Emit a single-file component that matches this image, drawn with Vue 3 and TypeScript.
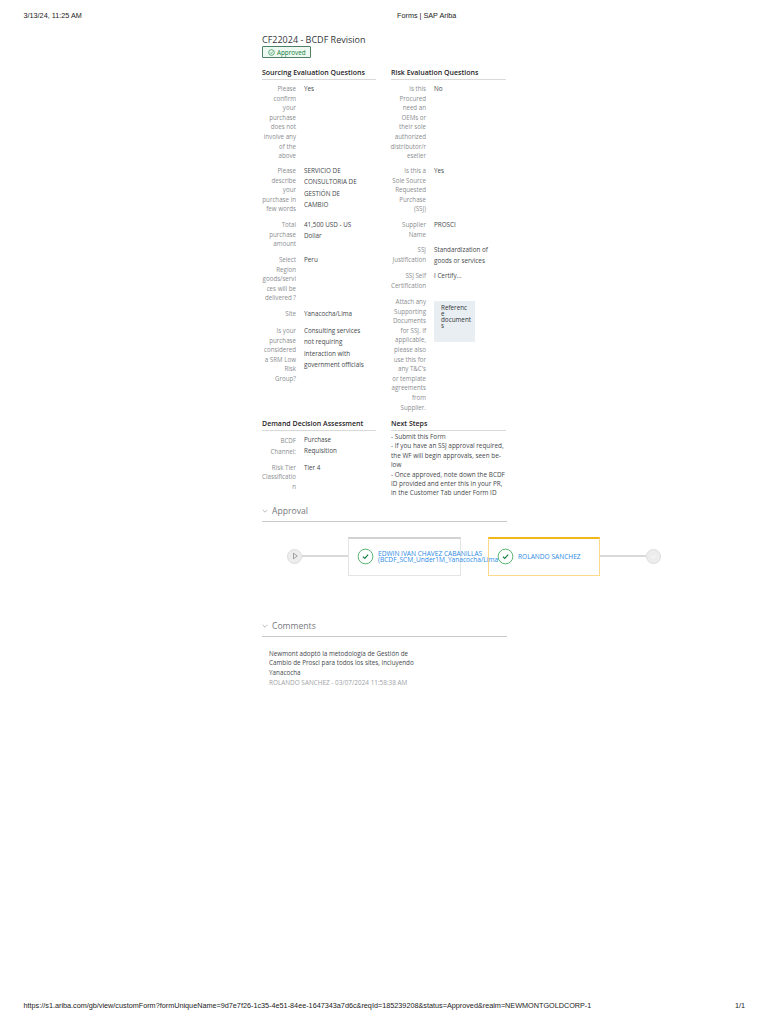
<script setup lang="ts">
interface Row { label: string; value?: string; height: number; doc?: boolean }

const sourcing: Row[] = [
  { label: 'Please confirm your purchase does not involve any of the above', value: 'Yes', height: 82 },
  { label: 'Please describe your purchase in few words', value: 'SERVICIO DE CONSULTORIA DE GESTIÓN DE CAMBIO', height: 54 },
  { label: 'Total purchase amount', value: '41,500 USD - US Dollar', height: 35 },
  { label: 'Select Region goods/services will be delivered ?', value: 'Peru', height: 54 },
  { label: 'Site', value: 'Yanacocha/Lima', height: 17 },
  { label: 'Is your purchase considered a SRM Low Risk Group?', value: 'Consulting services not requiring interaction with government officials', height: 60 },
]
const risk: Row[] = [
  { label: 'Is this Procured need an OEMs or their sole authorized distributor/\u2060reseller', value: 'No', height: 82 },
  { label: 'Is this a Sole Source Requested Purchase (SSJ)', value: 'Yes', height: 54 },
  { label: 'Supplier Name', value: 'PROSCI', height: 25 },
  { label: 'SSJ Justification', value: 'Standardization of goods or services', height: 26 },
  { label: 'SSJ Self Certification', value: 'I Certify...', height: 26 },
  { label: "Attach any Supporting Documents for SSJ. If applicable, please also use this for any T&C's or template agreements from Supplier.", height: 116, doc: true },
]
const demand: Row[] = [
  { label: 'BCDF Channel:', value: 'Purchase Requisition', height: 28 },
  { label: 'Risk Tier Classification', value: 'Tier 4', height: 30 },
]
</script>

<template>
  <div class="page">
    <header class="print-head">
      <span class="print-date">3/13/24, 11:25 AM</span>
      <span>Forms | SAP Ariba</span>
    </header>

    <main class="sheet">
      <h1 class="title">CF22024 - BCDF Revision</h1>
      <div class="badge">
        <svg class="badge-icon" viewBox="0 0 16 16">
          <circle cx="8" cy="8" r="6.5" />
          <path d="M5 8.2 7.3 10.5 11.2 5.8" />
        </svg>
        Approved
      </div>

      <div class="columns top">
        <section class="left">
          <h2 class="heading">Sourcing Evaluation Questions</h2>
          <div v-for="r in sourcing" :key="r.label" class="row" :style="{ height: r.height + 'px' }">
            <div class="label">{{ r.label }}</div>
            <div class="value">{{ r.value }}</div>
          </div>
        </section>
        <section class="right">
          <h2 class="heading">Risk Evaluation Questions</h2>
          <div v-for="r in risk" :key="r.label" class="row" :style="{ height: r.height + 'px' }">
            <div class="label">{{ r.label }}</div>
            <div v-if="r.doc" class="doc">Referenc<br />e<br />document<br />s</div>
            <div v-else class="value">{{ r.value }}</div>
          </div>
        </section>
      </div>

      <div class="columns lower">
        <section class="left demand">
          <h2 class="heading">Demand Decision Assessment</h2>
          <div v-for="r in demand" :key="r.label" class="row" :style="{ height: r.height + 'px' }">
            <div class="label">{{ r.label }}</div>
            <div class="value">{{ r.value }}</div>
          </div>
        </section>
        <section class="right">
          <h2 class="heading">Next Steps</h2>
          <div class="steps">
            - Submit this Form<br />
            - If you have an SSJ approval required, the WF will begin approvals, seen be-<br />low<br />
            - Once approved, note down the BCDF ID provided and enter this in your PR, in the Customer Tab under Form ID
          </div>
        </section>
      </div>

      <h2 class="fold first">
        <svg class="chev" viewBox="0 0 10 6"><path d="M1 1 5 5 9 1" /></svg>
        Approval
      </h2>

      <div class="flow">
        <div class="terminal">
          <svg viewBox="0 0 16 16" class="term-icon"><path d="M5 2.5 12.5 8 5 13.5Z" /></svg>
        </div>
        <div class="wire"></div>
        <div class="node">
          <svg class="ok" viewBox="0 0 18 18">
            <circle cx="9" cy="9" r="7.8" />
            <path d="M6.2 9.2 8.2 11.1 11.8 7" />
          </svg>
          <div class="node-text">EDWIN IVAN CHAVEZ CABANILLAS<br />(BCDF_SCM_Under1M_Yanacocha/Lima</div>
        </div>
        <div class="spacer"></div>
        <div class="node current">
          <svg class="ok" viewBox="0 0 18 18">
            <circle cx="9" cy="9" r="7.8" />
            <path d="M6.2 9.2 8.2 11.1 11.8 7" />
          </svg>
          <div class="node-text">ROLANDO SANCHEZ</div>
        </div>
        <div class="wire"></div>
        <div class="terminal done">
          <svg viewBox="0 0 16 16" class="end-icon"><path d="M4.5 8.2 7 10.6 11.5 5.6" /></svg>
        </div>
      </div>

      <h2 class="fold second">
        <svg class="chev" viewBox="0 0 10 6"><path d="M1 1 5 5 9 1" /></svg>
        Comments
      </h2>

      <div class="comment">
        <p>Newmont adoptó la metodología de Gestión de<br />Cambio de Prosci para todos los sites, incluyendo<br />Yanacocha</p>
        <p class="meta">ROLANDO SANCHEZ - 03/07/2024 11:58:38 AM</p>
      </div>
    </main>

    <footer class="print-foot">
      <span>https://s1.ariba.com/gb/view/customForm?formUniqueName=9d7e7f26-1c35-4e51-84ee-1647343a7d6c&amp;reqId=185239208&amp;status=Approved&amp;realm=NEWMONTGOLDCORP-1</span>
      <span>1/1</span>
    </footer>
  </div>
</template>

<style scoped>
.page {
  width: 768px;
  height: 1024px;
  display: flex;
  flex-direction: column;
  background: #fff;
  color: #32363a;
  font-family: "Open Sans", "Noto Sans", sans-serif;
  font-size: 6.3px;
  overflow: hidden;
}
.print-head,
.print-foot {
  font-family: "Liberation Sans", Arial, sans-serif;
  font-size: 7.25px;
  color: #222;
  line-height: 9px;
  height: 23px;
  box-sizing: border-box;
}
.print-head {
  display: flex;
  padding: 11px 0 0 23.5px;
}
.print-date { width: 373.5px; flex: none; }
.sheet {
  flex: 1;
  padding-left: 262px;
  width: 245px;
}
.title {
  margin: 10px 0 0;
  font-size: 9px;
  font-weight: 400;
  line-height: 13px;
  color: #32363a;
}
.badge {
  width: 49px;
  height: 12px;
  box-sizing: border-box;
  border: 1px solid #4f7f64;
  border-radius: 1px;
  background: #eef9f1;
  color: #107e3e;
  font-size: 6.3px;
  display: flex;
  align-items: center;
  gap: 2px;
  padding-left: 5px;
}
.badge-icon { width: 7px; height: 7px; flex: none; }
.badge-icon circle, .badge-icon path { fill: none; stroke: #107e3e; stroke-width: 1.4; }
.columns {
  display: grid;
  grid-template-columns: 114px 115px;
  gap: 15px;
}
.top { margin-top: 9px; }
.lower { margin-top: 4.5px; }
.heading {
  margin: 0 0 4px;
  height: 13px;
  box-sizing: border-box;
  border-bottom: 1px solid #d9d9d9;
  font-size: 7px;
  font-weight: 600;
  line-height: 11px;
  color: #1f2327;
  white-space: nowrap;
}
.row {
  display: grid;
  column-gap: 8px;
  align-items: start;
}
.left .row { grid-template-columns: 34px 62px; }
.right .row { grid-template-columns: 35px 62px; }
.right .row:nth-child(2) .label { margin-left: -1px; }
.label {
  text-align: right;
  color: #8a8d90;
  font-size: 6.2px;
  line-height: 9.6px;
  overflow-wrap: anywhere;
}
.value {
  line-height: 11.4px;
  margin-top: -1px;
  color: #45484b;
}
.demand .value { width: 50px; }
.demand .row:nth-child(2) .label { line-height: 11.4px; }
.doc {
  margin-top: 4px;
  width: 41px;
  height: 41px;
  box-sizing: border-box;
  padding: 4px 0 0 7px;
  background: #e9eef2;
  font-size: 6.3px;
  line-height: 5.9px;
  color: #32363a;
}
.steps {
  line-height: 9.4px;
  margin-top: -2.5px;
  font-size: 6.4px;
  color: #45484b;
}
.fold {
  display: flex;
  align-items: center;
  gap: 4px;
  margin: 0;
  height: 18px;
  box-sizing: border-box;
  border-bottom: 1px solid #c8c8c8;
  font-size: 8.6px;
  font-weight: 400;
  color: #75787b;
  line-height: 14px;
  padding-bottom: 3px;
}
.first { margin-top: 6px; }
.chev { width: 6px; height: 4px; flex: none; }
.chev path { fill: none; stroke: #8a8d90; stroke-width: 1; }
.flow {
  width: 399px;
  margin-left: 25px;
  height: 39px;
  margin-top: 15px;
  margin-bottom: 43px;
  display: flex;
  align-items: center;
}
.terminal {
  width: 15px;
  height: 15px;
  flex: none;
  box-sizing: border-box;
  border: 1px solid #dcdcdc;
  border-radius: 50%;
  background: #ededed;
  display: flex;
  align-items: center;
  justify-content: center;
}
.term-icon { width: 8px; height: 8px; }
.term-icon path { fill: none; stroke: #74777a; stroke-width: 1.3; }
.end-icon { width: 9px; height: 9px; }
.end-icon path { fill: none; stroke: #fff; stroke-width: 1.4; }
.wire {
  width: 46px;
  height: 2px;
  background: #d9d9d9;
  flex: none;
}
.spacer { width: 27px; flex: none; }
.node {
  width: 113px;
  height: 39px;
  flex: none;
  box-sizing: border-box;
  border: 1px solid #e4e4e4;
  border-top: 2px solid #d2d2d2;
  display: flex;
  align-items: center;
  gap: 4px;
  padding-left: 8px;
}
.node.current {
  width: 112px;
  border: 1px solid #fbd98a;
  border-top: 2px solid #f5b61c;
}
.ok { width: 17px; height: 17px; flex: none; }
.ok circle { fill: #fff; stroke: #3aa655; stroke-width: 0.9; }
.ok path { fill: none; stroke: #107e3e; stroke-width: 1.2; }
.node-text {
  color: #2b8ae6;
  font-size: 6.6px;
  line-height: 6px;
  white-space: nowrap;
}
.comment {
  padding: 12px 0 0 7px;
  line-height: 9.6px;
  color: #45484b;
}
.comment p { margin: 0; white-space: nowrap; }
.meta { color: #a0a3a6; font-size: 6.4px; }
.print-foot {
  display: flex;
  justify-content: space-between;
  padding: 0 23px 12px 23.5px;
}
</style>

<style>
html, body { margin: 0; background: #fff; }
</style>
